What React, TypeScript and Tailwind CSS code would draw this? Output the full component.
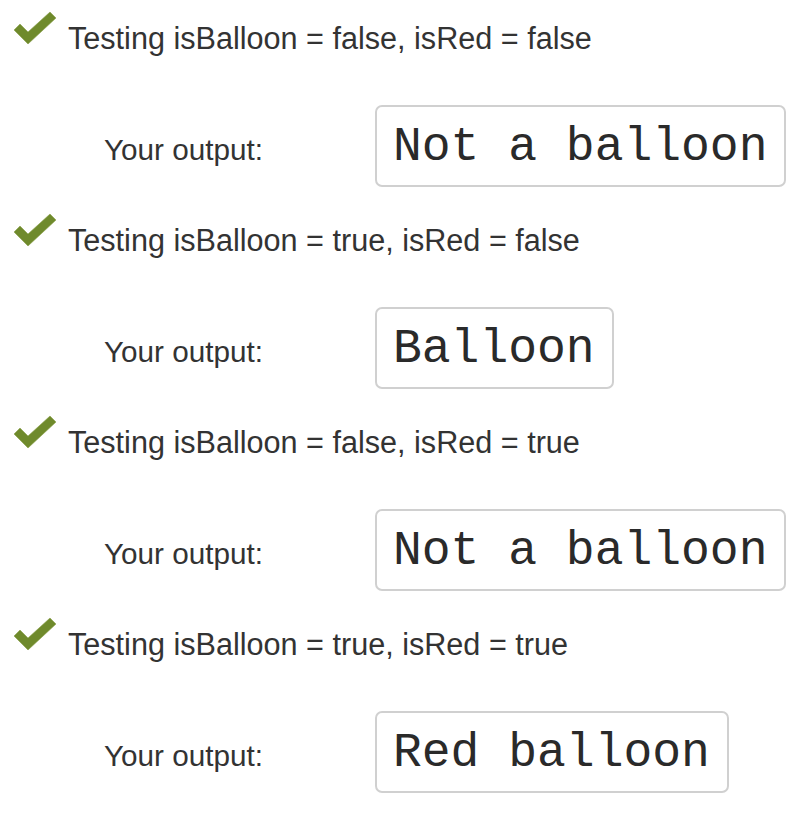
const tests = [
  { title: "Testing isBalloon = false, isRed = false", output: "Not a balloon" },
  { title: "Testing isBalloon = true, isRed = false", output: "Balloon" },
  { title: "Testing isBalloon = false, isRed = true", output: "Not a balloon" },
  { title: "Testing isBalloon = true, isRed = true", output: "Red balloon" },
]

const Check = () => (
  <svg width="44" height="36" viewBox="0 0 44 36" className="absolute left-[13px] top-[11px]">
    <polygon points="1,19 7,13 15,21 37,1 43,7 15,33" fill="#6f8a2c" stroke="#8aa04a" strokeWidth="0.6" />
  </svg>
)

const App = () => {
  return (
    <div className="w-[808px] h-[818px] bg-white text-[#333] font-['Liberation_Sans',Arial,sans-serif]">
      {tests.map((t, i) => (
        <div key={i} className="h-[202px] flex flex-col">
          <div className="relative h-[76px] flex items-center pl-[68px]">
            <Check />
            <span className="text-[30.6px] leading-none">{t.title}</span>
          </div>
          <div className="mt-[29px] flex items-baseline pl-[104px]">
            <span className="w-[271px] text-[29.7px] leading-none">Your output:</span>
            <div className="h-[82px] flex items-center pl-[16px] pr-[17px] pt-[2px] border-2 border-[#d0d0d0] rounded-[7px] font-['Liberation_Mono','Courier_New',monospace] text-[#2a2a2a] text-[48px] leading-none whitespace-pre">
              {t.output}
            </div>
          </div>
        </div>
      ))}
    </div>
  )
}

export default App
